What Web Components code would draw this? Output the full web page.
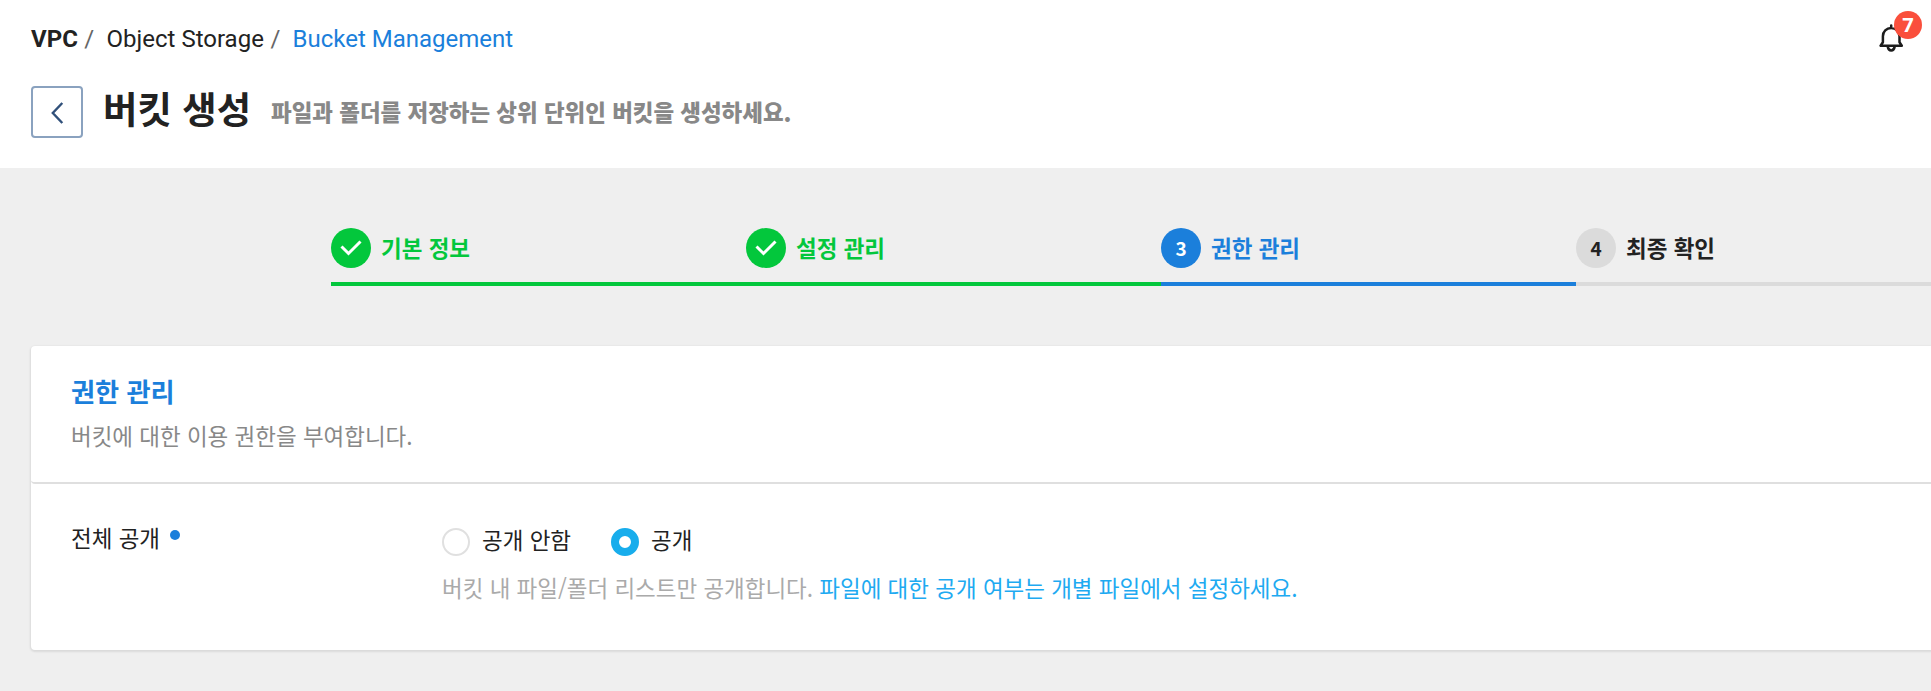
<!DOCTYPE html>
<html lang="ko">
<head>
<meta charset="utf-8">
<title>Bucket Management</title>
<style>
    html, body {
        margin: 0;
        height: 100%;
        overflow: hidden;
    }

    body {
        background: #efefef;
        color: #222;
        font-family: "Noto Sans CJK KR", sans-serif;
        font-size: 22.48px;
    }
</style>
</head>
<body>
<bucket-page></bucket-page>

<script>
function define(name, html, setup) {
    const template = document.createElement('template');
    template.innerHTML = html;

    customElements.define(name, class extends HTMLElement {
        constructor() {
            super();
            this.attachShadow({ mode: 'open' });
            this.shadowRoot.appendChild(template.content.cloneNode(true));
        }

        connectedCallback() {
            if (setup) setup(this, this.shadowRoot);
        }
    });
}

define('bread-crumb', `
    <style>
        :host {
            display: flex;
            font: 400 24px/32px Roboto, sans-serif;
            white-space: pre;
        }
        i { font-style: normal; color: #666; margin: 0 12.3px 0 6.5px; }
        ::slotted(b) { font-weight: 700; }
        ::slotted(a) { color: #1b7fdb; }
    </style>
    <slot name="root"></slot><i>/</i><slot name="parent"></slot><i>/</i><slot name="current"></slot>
`);

define('notification-bell', `
    <style>
        :host { display: block; position: relative; width: 43px; height: 42px; }
        svg { position: absolute; left: 0; top: 13px; }
        span {
            position: absolute;
            left: 15px;
            top: 0;
            width: 28px;
            height: 28px;
            border-radius: 50%;
            background: #fa4f3c;
            color: #fff;
            font: 700 20px/28px "Noto Sans", sans-serif;
            text-align: center;
        }
    </style>
    <svg width="25" height="28" viewBox="0 0 25 28" fill="none" stroke="#1c1c1c" stroke-width="2.5" stroke-linecap="round" stroke-linejoin="round">
        <path d="M12.2 1.5v2.3M1.6 21.7h21.2l-2.3-3.5v-6c0-4.7-3.5-8.2-8.3-8.2s-8.3 3.5-8.3 8.2v6z"/>
        <path d="M8.7 22.5c.4 2.5 1.8 3.9 3.5 3.9s3.100-1.400 3.500-3.900"/>
    </svg>
    <span></span>
`, (el, root) => {
    root.querySelector('span').textContent = el.getAttribute('count');
});

define('back-button', `
    <style>
        :host { display: block; }
        button {
            display: flex;
            align-items: center;
            justify-content: center;
            box-sizing: border-box;
            width: 52px;
            height: 52px;
            padding: 2px 0 0;
            border: 2px solid #8aa2bf;
            border-radius: 4px;
            background: #fff;
        }
    </style>
    <button aria-label="back">
        <svg width="14" height="24" viewBox="0 0 14 24" fill="none" stroke="#30507a" stroke-width="2.4">
            <path d="M12.300 2 2.800 12l9.500 10"/>
        </svg>
    </button>
`);

define('page-header', `
    <style>
        :host {
            display: block;
            box-sizing: border-box;
            height: 168px;
            padding: 11px 9px 0 31px;
            background: #fff;
        }
        .top { display: flex; justify-content: space-between; height: 44px; }
        .top bread-crumb { margin-top: 12px; }
        .heading { display: flex; height: 52px; margin-top: 31px; white-space: nowrap; }
        h1 { margin: -4px 0 0 20px; font-size: 37.4px; line-height: 52px; font-weight: 700; }
        p { margin: -1px 0 0 20px; font-size: 22.45px; line-height: 52px; font-weight: 900; color: #888; }
    </style>
    <div class="top">
        <bread-crumb>
            <b slot="root">VPC</b>
            <span slot="parent">Object Storage</span>
            <a slot="current">Bucket Management</a>
        </bread-crumb>
        <notification-bell count="7"></notification-bell>
    </div>
    <div class="heading">
        <back-button></back-button>
        <h1><slot name="title"></slot></h1>
        <p><slot name="summary"></slot></p>
    </div>
`);

define('wizard-step', `
    <style>
        :host {
            --tone: #dbdbdb;
            display: flex;
            align-items: flex-start;
            box-sizing: border-box;
            flex: 0 0 415px;
            height: 58px;
            border-bottom: 4px solid var(--tone);
            font-weight: 700;
        }
        :host(:last-child) { flex: 1; }
        :host([state=done]) { --tone: #03c73c; color: #03c73c; }
        :host([state=current]) { --tone: #1b7fdb; color: #1b7fdb; }
        .mark {
            display: flex;
            align-items: center;
            justify-content: center;
            width: 40px;
            height: 40px;
            border-radius: 50%;
            background: var(--tone);
            font-size: 19px;
            line-height: 38px;
        }
        :host([state=current]) .mark { color: #fff; }
        .label { margin-left: 10px; line-height: 38px; }
    </style>
    <div class="mark"></div>
    <div class="label"><slot></slot></div>
`, (el, root) => {
    const mark = root.querySelector('.mark');
    if (el.getAttribute('state') === 'done') {
        mark.innerHTML = '<svg width="22" height="18" viewBox="0 0 22 18" fill="none" stroke="#fff" stroke-width="3"><path d="M1.500 7.500 8.500 14.500 20.500 2.500"/></svg>';
    } else {
        mark.textContent = el.getAttribute('number');
    }
});

define('wizard-steps', `
    <style>
        :host { display: flex; margin: 60px 0 0 331px; }
    </style>
    <slot></slot>
`);

define('panel-card', `
    <style>
        :host {
            display: block;
            margin: 60px 0 0 31px;
            border-radius: 4px 0 0 4px;
            background: #fff;
            box-shadow: 0 1px 2px 1px rgba(0, 0, 0, .09);
        }
        header {
            box-sizing: border-box;
            height: 138px;
            padding: 26px 40px 0;
            border-bottom: 2px solid #dfdfdf;
            border-radius: 4px 0 0 4px;
        }
        h2 { margin: 0; font-size: 26.2px; line-height: 38px; font-weight: 700; color: #1b7fdb; }
        p { margin: 8px 0 0; line-height: 34px; color: #888; }
        .body { box-sizing: border-box; height: 166px; padding: 36px 40px 0; }
    </style>
    <header>
        <h2><slot name="title"></slot></h2>
        <p><slot name="summary"></slot></p>
    </header>
    <div class="body"><slot></slot></div>
`);

define('form-row', `
    <style>
        :host { display: flex; }
        .name { display: flex; width: 371px; line-height: 34px; }
        .name::after {
            content: "";
            width: 10px;
            height: 10px;
            margin: 10px 0 0 10px;
            border-radius: 50%;
            background: #1b7fdb;
        }
        .help { margin-top: 14px; line-height: 34px; color: #aaa; }
        ::slotted(em) { font-style: normal; color: #1eaaf1; }
        .options { display: flex; gap: 40px; margin-top: 2px; }
    </style>
    <div class="name"><slot name="name"></slot></div>
    <div>
        <div class="options"><slot></slot></div>
        <div class="help"><slot name="help"></slot> <slot name="note"></slot></div>
    </div>
`);

define('radio-option', `
    <style>
        :host { display: flex; gap: 12px; height: 34px; line-height: 34px; }
        .dot {
            box-sizing: border-box;
            width: 28px;
            height: 28px;
            margin-top: 6px;
            border: 2px solid #e0e0e0;
            border-radius: 50%;
            background: #fff;
        }
        :host([checked]) .dot { border: 8px solid #18adec; }
    </style>
    <div class="dot"></div>
    <slot></slot>
`);

define('bucket-page', `
    <style>
        :host { display: block; }
    </style>
    <page-header>
        <span slot="title">버킷 생성</span>
        <span slot="summary">파일과 폴더를 저장하는 상위 단위인 버킷을 생성하세요.</span>
    </page-header>
    <wizard-steps>
        <wizard-step state="done">기본 정보</wizard-step>
        <wizard-step state="done">설정 관리</wizard-step>
        <wizard-step state="current" number="3">권한 관리</wizard-step>
        <wizard-step number="4">최종 확인</wizard-step>
    </wizard-steps>
    <panel-card>
        <span slot="title">권한 관리</span>
        <span slot="summary">버킷에 대한 이용 권한을 부여합니다.</span>
        <form-row>
            <span slot="name">전체 공개</span>
            <radio-option>공개 안함</radio-option>
            <radio-option checked>공개</radio-option>
            <span slot="help">버킷 내 파일/폴더 리스트만 공개합니다.</span>
            <em slot="note">파일에 대한 공개 여부는 개별 파일에서 설정하세요.</em>
        </form-row>
    </panel-card>
`);
</script>
</body>
</html>
